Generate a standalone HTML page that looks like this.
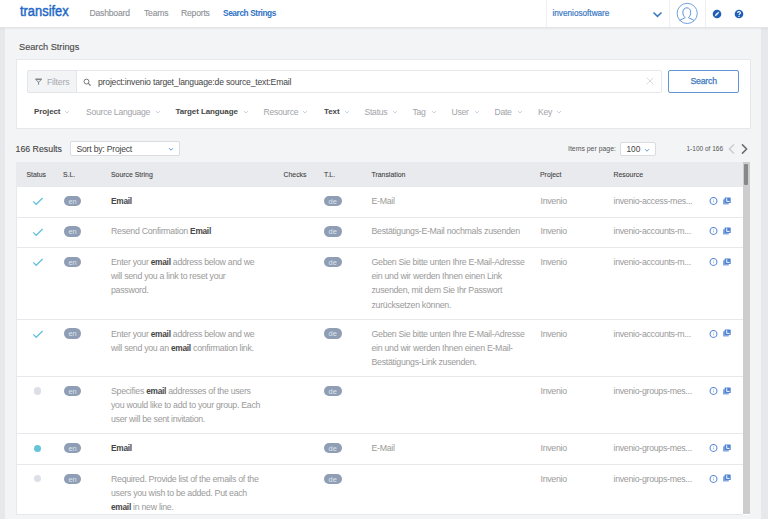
<!DOCTYPE html>
<html><head><meta charset="utf-8">
<style>
*{margin:0;padding:0;box-sizing:border-box}
html,body{width:768px;height:519px;overflow:hidden;background:#f3f4f6;font-family:"Liberation Sans",sans-serif;color:#555}
.a{position:absolute;white-space:nowrap;z-index:3}
#hdr{position:absolute;left:0;top:0;width:768px;height:28px;background:#fff;border-bottom:1px solid #e2e4e7;box-shadow:0 1px 1.5px rgba(0,0,0,0.05);z-index:2}
.logo{left:19.6px;top:3px;font-size:14px;font-weight:400;color:#2168c6;-webkit-text-stroke:0.45px #2168c6;transform:scaleX(0.92);transform-origin:0 0;letter-spacing:0}
.nav{top:7.6px;font-size:8.6px;letter-spacing:-0.2px;color:#8c8f95;-webkit-text-stroke:0.1px #8c8f95}
.vsep{position:absolute;top:0;width:1px;height:27px;background:#edeff2;z-index:3}
#lstrip{position:absolute;left:0;top:27px;width:5px;height:492px;background:#e7e8eb}
#rstrip{position:absolute;left:761px;top:27px;width:7px;height:492px;background:#e7e8eb}
#card{position:absolute;left:16px;top:59px;width:735px;height:70px;background:#fff;border:1px solid #e6e8eb}
#inp{position:absolute;left:27px;top:70px;width:634.5px;height:23px;background:#fff;border:1px solid #e6e8eb;border-radius:2px}
#filt{position:absolute;left:27px;top:70px;width:50px;height:23px;background:#f3f4f6;border:1px solid #e3e5e8;border-radius:2px 0 0 2px}
#btn{position:absolute;left:668px;top:70px;width:71px;height:23px;border:1.2px solid #6194d2;border-radius:2px;background:#fff}
.fac{top:107px;font-size:8.6px;letter-spacing:-0.25px;color:#9fa3a9}
.fac.b{font-weight:700;color:#474747;font-size:8px;letter-spacing:-0.1px}
#sel{position:absolute;left:69.8px;top:141px;width:110px;height:15px;background:#fff;border:1px solid #d9dce0;border-radius:2px}
#ipp{position:absolute;left:620px;top:142px;width:36px;height:14px;background:#fff;border:1px solid #d9dce0;border-radius:2px}
#tbl{position:absolute;left:16px;top:162px;width:734px;height:353px;background:#fff;border-left:1px solid #e6e8eb}
#thead{position:absolute;left:16px;top:162px;width:727px;height:24.5px;background:#e9eaee}
.th{top:171px;font-size:6.9px;color:#444;-webkit-text-stroke:0.1px #444}
.row{position:absolute;left:17px;width:726px;border-bottom:1px solid #e7e8eb}
.t{font-size:8.8px;letter-spacing:-0.3px;color:#9a9a9a;line-height:14.3px}
.t b{color:#464646;font-weight:700;font-size:8.3px;letter-spacing:-0.25px}
.badge{position:absolute;width:17.8px;height:10.6px;border-radius:6px;background:#8f9db5;color:#dfe4ec;font-size:7.4px;text-align:center;line-height:12px}
#track{position:absolute;left:743px;top:162px;width:7px;height:352px;background:#cdcdcd}
#thumb{position:absolute;left:744.4px;top:163.5px;width:3.8px;height:21px;background:#888;border-radius:1px}
</style></head><body>
<div id="hdr"></div>
<div class="a logo">transifex</div>
<div class="a nav" style="left:89.5px">Dashboard</div>
<div class="a nav" style="left:144px">Teams</div>
<div class="a nav" style="left:181px">Reports</div>
<div class="a nav" style="left:223px;color:#2f72c4;font-weight:700;font-size:8.3px;letter-spacing:-0.4px;top:8.1px;-webkit-text-stroke:0">Search Strings</div>
<div class="vsep" style="left:545.7px"></div>
<div class="a nav" style="left:552.5px;color:#3a78c4;top:9.0px;font-size:8.2px;letter-spacing:0px;-webkit-text-stroke:0.2px #3a78c4">inveniosoftware</div>
<svg class="a" style="left:652px;top:11px" width="11" height="7" viewBox="0 0 11 7"><path d="M1.5 1.5 L5.5 5.3 L9.5 1.5" fill="none" stroke="#3f79c3" stroke-width="1.6"/></svg>
<div class="vsep" style="left:669.3px"></div>
<svg class="a" style="left:676px;top:2px" width="23" height="23" viewBox="0 0 23 23"><circle cx="11.2" cy="11.4" r="10.1" fill="none" stroke="#6097d8" stroke-width="0.9"/><path d="M3.6 18.6 C5 17.2 8 16.6 9.2 15.6 C7.6 14.4 6.9 12.4 6.9 10.2 C6.9 7.6 8.6 5.8 10.8 5.8 C13 5.8 14.7 7.6 14.7 10.2 C14.7 12.4 14 14.4 12.4 15.6 C13.6 16.6 16.6 17.2 18 18.6" fill="none" stroke="#5a93d6" stroke-width="1"/></svg>
<div class="vsep" style="left:705px"></div>
<svg class="a" style="left:711.6px;top:9.3px" width="10" height="10" viewBox="0 0 10 10"><circle cx="5" cy="5" r="4.3" fill="#1f5fb8"/><path d="M7.2 2.6 C6.8 4.6 5.2 6.4 2.8 7.4 C3.2 5.4 4.8 3.6 7.2 2.6 Z" fill="#fff"/></svg>
<svg class="a" style="left:734px;top:9px" width="10" height="10" viewBox="0 0 10 10"><circle cx="5" cy="5" r="4.3" fill="#1f5fb8"/><path d="M3.6 4 C3.6 2.2 6.4 2.2 6.4 3.9 C6.4 5 5 5 5 6" fill="none" stroke="#fff" stroke-width="1.1"/><circle cx="5" cy="7.4" r="0.65" fill="#fff"/></svg>

<div id="lstrip"></div>
<div id="rstrip"></div>

<div class="a" style="left:19px;top:42px;font-size:9.2px;color:#4d4d4d;-webkit-text-stroke:0.15px #4d4d4d">Search Strings</div>

<div id="card"></div>
<div id="inp"></div>
<div id="filt"></div>
<svg class="a" style="left:35px;top:77.5px" width="8" height="8" viewBox="0 0 8 8"><path d="M0.3 0.4 H6.9 V1.5 L4.1 4.3 V7.1 L3.1 6.5 V4.3 L0.3 1.5 Z" fill="#808285"/><path d="M1.8 1.9 H5.4 L3.6 3.7 Z" fill="#f3f4f6"/></svg>
<div class="a" style="left:47px;top:77px;font-size:8.6px;letter-spacing:-0.15px;color:#a5a8ad">Filters</div>
<svg class="a" style="left:83px;top:77.5px" width="9" height="9" viewBox="0 0 9 9"><circle cx="3.5" cy="3.6" r="2.45" fill="none" stroke="#707070" stroke-width="0.95"/><path d="M5.3 5.4 L7.6 7.6" stroke="#707070" stroke-width="1.1"/></svg>
<div class="a" style="left:98px;top:77.2px;font-size:8.6px;letter-spacing:-0.18px;color:#444">project:invenio target_language:de source_text:Email</div>
<svg class="a" style="left:645.8px;top:77.4px" width="8" height="8" viewBox="0 0 8 8"><path d="M0.7 0.7 L7.3 7.3 M7.3 0.7 L0.7 7.3" stroke="#dadbde" stroke-width="1"/></svg>
<div id="btn"></div>
<div class="a" style="left:690.5px;top:76.3px;font-size:8.7px;letter-spacing:-0.2px;color:#3a78be;-webkit-text-stroke:0.25px #3a78be">Search</div>

<div class="a fac b" style="left:34px">Project</div><svg class="a" style="left:64.2px;top:110.3px" width="6" height="4" viewBox="0 0 6 4"><path d="M1 1 L3 3 L5 1" fill="none" stroke="#c3c6cb" stroke-width="0.8"/></svg>
<div class="a fac" style="left:86px">Source Language</div><svg class="a" style="left:155.2px;top:110.3px" width="6" height="4" viewBox="0 0 6 4"><path d="M1 1 L3 3 L5 1" fill="none" stroke="#c3c6cb" stroke-width="0.8"/></svg>
<div class="a fac b" style="left:175.5px">Target Language</div><svg class="a" style="left:243.2px;top:110.3px" width="6" height="4" viewBox="0 0 6 4"><path d="M1 1 L3 3 L5 1" fill="none" stroke="#c3c6cb" stroke-width="0.8"/></svg>
<div class="a fac" style="left:263.5px">Resource</div><svg class="a" style="left:302.2px;top:110.3px" width="6" height="4" viewBox="0 0 6 4"><path d="M1 1 L3 3 L5 1" fill="none" stroke="#c3c6cb" stroke-width="0.8"/></svg>
<div class="a fac b" style="left:324px">Text</div><svg class="a" style="left:343.7px;top:110.3px" width="6" height="4" viewBox="0 0 6 4"><path d="M1 1 L3 3 L5 1" fill="none" stroke="#c3c6cb" stroke-width="0.8"/></svg>
<div class="a fac" style="left:364.5px">Status</div><svg class="a" style="left:391.7px;top:110.3px" width="6" height="4" viewBox="0 0 6 4"><path d="M1 1 L3 3 L5 1" fill="none" stroke="#c3c6cb" stroke-width="0.8"/></svg>
<div class="a fac" style="left:412.5px">Tag</div><svg class="a" style="left:430.7px;top:110.3px" width="6" height="4" viewBox="0 0 6 4"><path d="M1 1 L3 3 L5 1" fill="none" stroke="#c3c6cb" stroke-width="0.8"/></svg>
<div class="a fac" style="left:451.5px">User</div><svg class="a" style="left:473.7px;top:110.3px" width="6" height="4" viewBox="0 0 6 4"><path d="M1 1 L3 3 L5 1" fill="none" stroke="#c3c6cb" stroke-width="0.8"/></svg>
<div class="a fac" style="left:494.5px">Date</div><svg class="a" style="left:517.2px;top:110.3px" width="6" height="4" viewBox="0 0 6 4"><path d="M1 1 L3 3 L5 1" fill="none" stroke="#c3c6cb" stroke-width="0.8"/></svg>
<div class="a fac" style="left:538px">Key</div><svg class="a" style="left:556.2px;top:110.3px" width="6" height="4" viewBox="0 0 6 4"><path d="M1 1 L3 3 L5 1" fill="none" stroke="#c3c6cb" stroke-width="0.8"/></svg>

<div class="a" style="left:15.5px;top:143.5px;font-size:8.8px;color:#444;-webkit-text-stroke:0.1px #444">166 Results</div>
<div id="sel"></div>
<div class="a" style="left:76.5px;top:143.6px;font-size:8.6px;letter-spacing:-0.2px;color:#444">Sort by: Project</div>
<svg class="a" style="left:167.5px;top:147px" width="6" height="5" viewBox="0 0 6 5"><path d="M1 1.2 L3 3.2 L5 1.2" fill="none" stroke="#4f88c8" stroke-width="0.9"/></svg>

<div class="a" style="left:568px;top:145px;font-size:6.9px;color:#555">Items per page:</div>
<div id="ipp"></div>
<div class="a" style="left:626.5px;top:143.9px;font-size:8.3px;color:#444">100</div>
<svg class="a" style="left:644px;top:147.8px" width="6" height="5" viewBox="0 0 6 5"><path d="M1 1.2 L3 3.2 L5 1.2" fill="none" stroke="#4f88c8" stroke-width="0.9"/></svg>
<div class="a" style="left:686.5px;top:145px;font-size:6.5px;color:#555">1-100 of 166</div>
<svg class="a" style="left:727px;top:143px" width="9" height="12" viewBox="0 0 9 12"><path d="M7 1.4 L2.4 6 L7 10.6" fill="none" stroke="#c9cbcf" stroke-width="1.4"/></svg>
<svg class="a" style="left:740px;top:143px" width="9" height="12" viewBox="0 0 9 12"><path d="M2 1.4 L6.6 6 L2 10.6" fill="none" stroke="#6b6b6b" stroke-width="1.5"/></svg>

<div id="tbl"></div>
<div id="thead"></div>
<div class="a th" style="left:26.5px">Status</div>
<div class="a th" style="left:63px">S.L.</div>
<div class="a th" style="left:111px">Source String</div>
<div class="a th" style="left:283.5px">Checks</div>
<div class="a th" style="left:324px">T.L.</div>
<div class="a th" style="left:371.5px">Translation</div>
<div class="a th" style="left:540px">Project</div>
<div class="a th" style="left:613.5px">Resource</div>

<!--ROWS-->
<div class="row" style="top:186.5px;height:31.2px"></div>
<svg class="a" style="left:32px;top:197.4px" width="12" height="9" viewBox="0 0 12 9"><path d="M1.2 4.4 L4.2 7.3 L10.6 1" fill="none" stroke="#5ec1db" stroke-width="1.2"/></svg>
<div class="badge" style="left:63.6px;top:195.9px">en</div>
<div class="badge" style="left:323.8px;top:195.9px">de</div>
<div class="a t" style="left:111px;top:194.0px"><b>Email</b></div>
<div class="a t" style="left:371.5px;top:194.0px">E-Mail</div>
<div class="a t" style="left:540.5px;top:194.0px">Invenio</div>
<div class="a t" style="left:613.5px;top:194.0px">invenio-access-mes...</div>
<svg class="a" style="left:708.6px;top:197.1px" width="9" height="9" viewBox="0 0 9 9"><circle cx="4.5" cy="4.0" r="3.45" fill="none" stroke="#5486d6" stroke-width="1.05"/><path d="M4.5 3.6 V5.3" stroke="#8aabe0" stroke-width="0.8"/><circle cx="4.5" cy="2.7" r="0.45" fill="#8aabe0"/></svg>
<svg class="a" style="left:722.2px;top:196.7px" width="10" height="9" viewBox="0 0 10 9"><rect x="1.0" y="2.2" width="5.8" height="5.2" rx="0.5" fill="#86a8de"/><rect x="2.6" y="0.5" width="6.1" height="5.4" rx="0.5" fill="#5083d4"/><path d="M4.7 1.3 V4.4 H7.6" fill="none" stroke="#fff" stroke-width="0.95"/></svg>
<div class="row" style="top:216.7px;height:31.7px"></div>
<svg class="a" style="left:32px;top:227.6px" width="12" height="9" viewBox="0 0 12 9"><path d="M1.2 4.4 L4.2 7.3 L10.6 1" fill="none" stroke="#5ec1db" stroke-width="1.2"/></svg>
<div class="badge" style="left:63.6px;top:226.1px">en</div>
<div class="badge" style="left:323.8px;top:226.1px">de</div>
<div class="a t" style="left:111px;top:224.2px">Resend Confirmation <b>Email</b></div>
<div class="a t" style="left:371.5px;top:224.2px">Bestätigungs-E-Mail nochmals zusenden</div>
<div class="a t" style="left:540.5px;top:224.2px">Invenio</div>
<div class="a t" style="left:613.5px;top:224.2px">invenio-accounts-m...</div>
<svg class="a" style="left:708.6px;top:227.3px" width="9" height="9" viewBox="0 0 9 9"><circle cx="4.5" cy="4.0" r="3.45" fill="none" stroke="#5486d6" stroke-width="1.05"/><path d="M4.5 3.6 V5.3" stroke="#8aabe0" stroke-width="0.8"/><circle cx="4.5" cy="2.7" r="0.45" fill="#8aabe0"/></svg>
<svg class="a" style="left:722.2px;top:226.9px" width="10" height="9" viewBox="0 0 10 9"><rect x="1.0" y="2.2" width="5.8" height="5.2" rx="0.5" fill="#86a8de"/><rect x="2.6" y="0.5" width="6.1" height="5.4" rx="0.5" fill="#5083d4"/><path d="M4.7 1.3 V4.4 H7.6" fill="none" stroke="#fff" stroke-width="0.95"/></svg>
<div class="row" style="top:247.4px;height:72.6px"></div>
<svg class="a" style="left:32px;top:258.3px" width="12" height="9" viewBox="0 0 12 9"><path d="M1.2 4.4 L4.2 7.3 L10.6 1" fill="none" stroke="#5ec1db" stroke-width="1.2"/></svg>
<div class="badge" style="left:63.6px;top:256.8px">en</div>
<div class="badge" style="left:323.8px;top:256.8px">de</div>
<div class="a t" style="left:111px;top:254.9px">Enter your <b>email</b> address below and we<br>will send you a link to reset your<br>password.</div>
<div class="a t" style="left:371.5px;top:254.9px">Geben Sie bitte unten Ihre E-Mail-Adresse<br>ein und wir werden Ihnen einen Link<br>zusenden, mit dem Sie Ihr Passwort<br>zurücksetzen können.</div>
<div class="a t" style="left:540.5px;top:254.9px">Invenio</div>
<div class="a t" style="left:613.5px;top:254.9px">invenio-accounts-m...</div>
<svg class="a" style="left:708.6px;top:258.0px" width="9" height="9" viewBox="0 0 9 9"><circle cx="4.5" cy="4.0" r="3.45" fill="none" stroke="#5486d6" stroke-width="1.05"/><path d="M4.5 3.6 V5.3" stroke="#8aabe0" stroke-width="0.8"/><circle cx="4.5" cy="2.7" r="0.45" fill="#8aabe0"/></svg>
<svg class="a" style="left:722.2px;top:257.6px" width="10" height="9" viewBox="0 0 10 9"><rect x="1.0" y="2.2" width="5.8" height="5.2" rx="0.5" fill="#86a8de"/><rect x="2.6" y="0.5" width="6.1" height="5.4" rx="0.5" fill="#5083d4"/><path d="M4.7 1.3 V4.4 H7.6" fill="none" stroke="#fff" stroke-width="0.95"/></svg>
<div class="row" style="top:319.0px;height:58.3px"></div>
<svg class="a" style="left:32px;top:329.9px" width="12" height="9" viewBox="0 0 12 9"><path d="M1.2 4.4 L4.2 7.3 L10.6 1" fill="none" stroke="#5ec1db" stroke-width="1.2"/></svg>
<div class="badge" style="left:63.6px;top:328.4px">en</div>
<div class="badge" style="left:323.8px;top:328.4px">de</div>
<div class="a t" style="left:111px;top:326.5px">Enter your <b>email</b> address below and we<br>will send you an <b>email</b> confirmation link.</div>
<div class="a t" style="left:371.5px;top:326.5px">Geben Sie bitte unten Ihre E-Mail-Adresse<br>ein und wir werden Ihnen einen E-Mail-<br>Bestätigungs-Link zusenden.</div>
<div class="a t" style="left:540.5px;top:326.5px">Invenio</div>
<div class="a t" style="left:613.5px;top:326.5px">invenio-accounts-m...</div>
<svg class="a" style="left:708.6px;top:329.6px" width="9" height="9" viewBox="0 0 9 9"><circle cx="4.5" cy="4.0" r="3.45" fill="none" stroke="#5486d6" stroke-width="1.05"/><path d="M4.5 3.6 V5.3" stroke="#8aabe0" stroke-width="0.8"/><circle cx="4.5" cy="2.7" r="0.45" fill="#8aabe0"/></svg>
<svg class="a" style="left:722.2px;top:329.2px" width="10" height="9" viewBox="0 0 10 9"><rect x="1.0" y="2.2" width="5.8" height="5.2" rx="0.5" fill="#86a8de"/><rect x="2.6" y="0.5" width="6.1" height="5.4" rx="0.5" fill="#5083d4"/><path d="M4.7 1.3 V4.4 H7.6" fill="none" stroke="#fff" stroke-width="0.95"/></svg>
<div class="row" style="top:376.3px;height:58.0px"></div>
<div class="a" style="left:34.0px;top:387.2px;width:7.4px;height:7.4px;border-radius:50%;background:#dcdfe6"></div>
<div class="badge" style="left:63.6px;top:385.7px">en</div>
<div class="badge" style="left:323.8px;top:385.7px">de</div>
<div class="a t" style="left:111px;top:383.8px">Specifies <b>email</b> addresses of the users<br>you would like to add to your group. Each<br>user will be sent invitation.</div>
<div class="a t" style="left:540.5px;top:383.8px">Invenio</div>
<div class="a t" style="left:613.5px;top:383.8px">invenio-groups-mes...</div>
<svg class="a" style="left:708.6px;top:386.9px" width="9" height="9" viewBox="0 0 9 9"><circle cx="4.5" cy="4.0" r="3.45" fill="none" stroke="#5486d6" stroke-width="1.05"/><path d="M4.5 3.6 V5.3" stroke="#8aabe0" stroke-width="0.8"/><circle cx="4.5" cy="2.7" r="0.45" fill="#8aabe0"/></svg>
<svg class="a" style="left:722.2px;top:386.5px" width="10" height="9" viewBox="0 0 10 9"><rect x="1.0" y="2.2" width="5.8" height="5.2" rx="0.5" fill="#86a8de"/><rect x="2.6" y="0.5" width="6.1" height="5.4" rx="0.5" fill="#5083d4"/><path d="M4.7 1.3 V4.4 H7.6" fill="none" stroke="#fff" stroke-width="0.95"/></svg>
<div class="row" style="top:433.3px;height:31.9px"></div>
<div class="a" style="left:34.0px;top:444.6px;width:7.4px;height:7.4px;border-radius:50%;background:#63c5d7"></div>
<div class="badge" style="left:63.6px;top:442.7px">en</div>
<div class="badge" style="left:323.8px;top:442.7px">de</div>
<div class="a t" style="left:111px;top:440.8px"><b>Email</b></div>
<div class="a t" style="left:371.5px;top:440.8px">E-Mail</div>
<div class="a t" style="left:540.5px;top:440.8px">Invenio</div>
<div class="a t" style="left:613.5px;top:440.8px">invenio-groups-mes...</div>
<svg class="a" style="left:708.6px;top:443.9px" width="9" height="9" viewBox="0 0 9 9"><circle cx="4.5" cy="4.0" r="3.45" fill="none" stroke="#5486d6" stroke-width="1.05"/><path d="M4.5 3.6 V5.3" stroke="#8aabe0" stroke-width="0.8"/><circle cx="4.5" cy="2.7" r="0.45" fill="#8aabe0"/></svg>
<svg class="a" style="left:722.2px;top:443.5px" width="10" height="9" viewBox="0 0 10 9"><rect x="1.0" y="2.2" width="5.8" height="5.2" rx="0.5" fill="#86a8de"/><rect x="2.6" y="0.5" width="6.1" height="5.4" rx="0.5" fill="#5083d4"/><path d="M4.7 1.3 V4.4 H7.6" fill="none" stroke="#fff" stroke-width="0.95"/></svg>
<div class="row" style="top:464.2px;height:51.1px"></div>
<div class="a" style="left:34.0px;top:475.1px;width:7.4px;height:7.4px;border-radius:50%;background:#dcdfe6"></div>
<div class="badge" style="left:63.6px;top:473.6px">en</div>
<div class="badge" style="left:323.8px;top:473.6px">de</div>
<div class="a t" style="left:111px;top:471.7px">Required. Provide list of the emails of the<br>users you wish to be added. Put each<br><b>email</b> in new line.</div>
<div class="a t" style="left:540.5px;top:471.7px">Invenio</div>
<div class="a t" style="left:613.5px;top:471.7px">invenio-groups-mes...</div>
<svg class="a" style="left:708.6px;top:474.8px" width="9" height="9" viewBox="0 0 9 9"><circle cx="4.5" cy="4.0" r="3.45" fill="none" stroke="#5486d6" stroke-width="1.05"/><path d="M4.5 3.6 V5.3" stroke="#8aabe0" stroke-width="0.8"/><circle cx="4.5" cy="2.7" r="0.45" fill="#8aabe0"/></svg>
<svg class="a" style="left:722.2px;top:474.4px" width="10" height="9" viewBox="0 0 10 9"><rect x="1.0" y="2.2" width="5.8" height="5.2" rx="0.5" fill="#86a8de"/><rect x="2.6" y="0.5" width="6.1" height="5.4" rx="0.5" fill="#5083d4"/><path d="M4.7 1.3 V4.4 H7.6" fill="none" stroke="#fff" stroke-width="0.95"/></svg>
<!--/ROWS-->

<div id="track"></div>
<div id="thumb"></div>
</body></html>
